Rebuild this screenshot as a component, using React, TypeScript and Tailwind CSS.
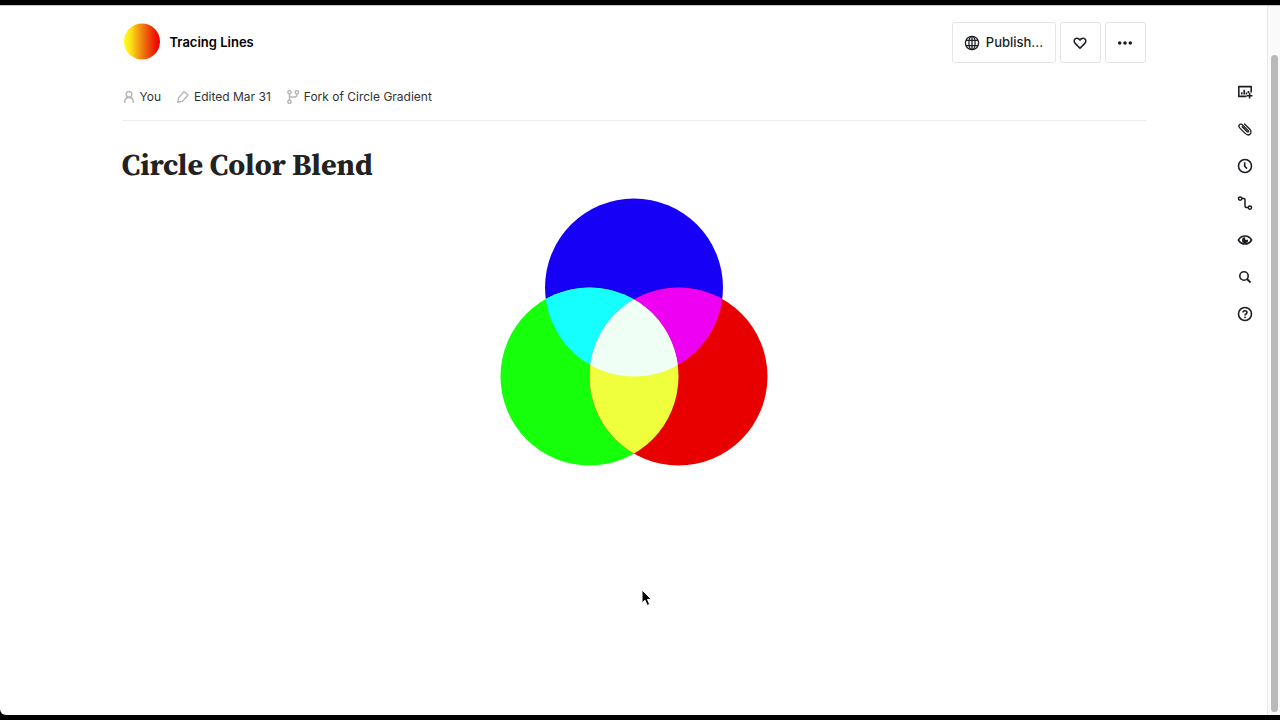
import type { ReactNode } from "react";

function Icon({ children, className = "size-4" }: { children: ReactNode; className?: string }) {
  return (
    <svg
      viewBox="0 0 16 16"
      className={className}
      fill="none"
      stroke="currentColor"
      strokeWidth={1.6}
      strokeLinejoin="round"
      aria-hidden="true"
    >
      {children}
    </svg>
  );
}

const tools: { label: string; icon: ReactNode }[] = [
  {
    label: "Insert cell",
    icon: (
      <>
        <path d="M9.5 12.4H1.800V2.600h12.400v6M4.800 10.400V8.200M7.200 10.400V5.800M9.400 10.400V8.600M11.400 9V7" />
        <path d="M12.600 8.800v5.800M9.700 11.700h5.800" />
      </>
    ),
  },
  {
    label: "File attachments",
    icon: (
      <path
        strokeLinecap="round"
        strokeWidth={1.3}
        d="M5.200 5.800 9.900 10.500c1.200 1.200 2.300.1 1.100-1.100L5.800 4.200C3.300 1.700.4 4.600 2.900 7.100l5.300 5.300c3.700 3.700 8.100-.7 4.400-4.400L7.600 3"
      />
    ),
  },
  {
    label: "History",
    icon: (
      <>
        <circle cx="8" cy="8" r="6.500" />
        <path d="M7.700 4.200V8.200L10 10.600" />
      </>
    ),
  },
  {
    label: "Minimap",
    icon: (
      <g strokeWidth={1.5}>
        <circle cx="3.200" cy="3.600" r="1.700" />
        <circle cx="12.900" cy="12.600" r="1.700" />
        <path d="M4.900 3.600h1.900Q8 3.600 8 4.800v6.500q0 1.300 1.200 1.300h2" />
      </g>
    ),
  },
  {
    label: "Preview",
    icon: (
      <>
        <path d="M1.400 8C3 5.200 5.400 4 8 4s5 1.200 6.600 4c-1.600 2.800-4 4-6.600 4S3 10.800 1.400 8Z" />
        <path d="M8.200 5.200v2.600h2.800A3 3 0 1 1 8.200 5.200Z" fill="currentColor" stroke="none" />
      </>
    ),
  },
  {
    label: "Search",
    icon: (
      <>
        <circle cx="7" cy="7" r="4.200" />
        <path d="m10 10 3.600 3.600" strokeWidth={1.900} />
      </>
    ),
  },
  {
    label: "Help",
    icon: (
      <>
        <circle cx="8" cy="8" r="6.500" />
        <path d="M6 6.600C6 5.300 6.900 4.700 8 4.700s2 .7 2 1.800c0 1.500-2 1.500-2 3" />
        <circle cx="8" cy="11.300" r=".9" fill="currentColor" stroke="none" />
      </>
    ),
  },
];

const actionButton =
  "flex h-[41px] items-center justify-center rounded-[3px] border border-[#e4e4e4] bg-white text-[#1b1e23]";

function ColorBlend() {
  return (
    <svg viewBox="0 0 268 268" className="w-[268px]" role="img" aria-label="Three overlapping circles">
      <defs>
        <clipPath id="blue-area">
          <circle cx="134" cy="89.500" r="89" />
        </clipPath>
        <clipPath id="green-area">
          <circle cx="89.500" cy="178.500" r="89" />
        </clipPath>
      </defs>
      <circle cx="134" cy="89.500" r="89" fill="#1600f5" />
      <circle cx="89.500" cy="178.500" r="89" fill="#16ff0b" />
      <circle cx="178.500" cy="178.500" r="89" fill="#e80000" />
      <g clipPath="url(#blue-area)">
        <circle cx="89.500" cy="178.500" r="89" fill="#16ffff" />
        <circle cx="178.500" cy="178.500" r="89" fill="#ee00f2" />
      </g>
      <g clipPath="url(#green-area)">
        <circle cx="178.500" cy="178.500" r="89" fill="#efff3c" />
        <g clipPath="url(#blue-area)">
          <circle cx="178.500" cy="178.500" r="89" fill="#f0fff6" />
        </g>
      </g>
    </svg>
  );
}

export default function App() {
  return (
    <div className="flex h-screen flex-col bg-black py-[5px] font-['Inter',sans-serif] text-[13px] text-[#1b1e23]">
      <div className="flex min-h-0 flex-1 overflow-hidden rounded-bl-md border-t border-[#c8c8c8] bg-white">
        <div className="w-11 shrink-0" />
        <main className="min-w-0 flex-1">
          <div className="mx-auto max-w-5xl">
            <header className="flex items-center justify-between pt-4">
              <a href="#author" className="flex items-center gap-2 font-semibold text-black">
                <svg viewBox="0 0 40 40" className="size-10" aria-hidden="true">
                  <defs>
                    <linearGradient id="avatar">
                      <stop offset="0" stopColor="#ffff18" />
                      <stop offset=".18" stopColor="#ffe316" />
                      <stop offset=".5" stopColor="#ee8010" />
                      <stop offset=".9" stopColor="#f00c00" />
                      <stop offset="1" stopColor="#ee0000" />
                    </linearGradient>
                  </defs>
                  <circle cx="20" cy="18.500" r="18" fill="url(#avatar)" />
                </svg>
                Tracing Lines
              </a>
              <div className="flex gap-1">
                <button type="button" className={`${actionButton} w-[104px] gap-[6px] font-medium`}>
                  <Icon>
                    <g strokeWidth={1.300}>
                      <circle cx="8" cy="8" r="6.600" />
                      <ellipse cx="8" cy="8" rx="3.100" ry="6.600" />
                      <path d="M8 1.400v13.200M2.200 5.400h11.600M2.200 10.600h11.600" />
                    </g>
                  </Icon>
                  Publish...
                </button>
                <button type="button" aria-label="Like" className={`${actionButton} w-[41px]`}>
                  <Icon>
                    <path d="M8 13.300 3.400 8.600C.9 6 2.600 3.200 5 3.200c1.300 0 2.300.7 3 1.900.7-1.200 1.700-1.900 3-1.900 2.400 0 4.100 2.800 1.600 5.400Z" />
                  </Icon>
                </button>
                <button type="button" aria-label="More" className={`${actionButton} w-[41px]`}>
                  <Icon>
                    <g fill="currentColor" stroke="none">
                      <circle cx="2.700" cy="8" r="1.800" />
                      <circle cx="8" cy="8" r="1.800" />
                      <circle cx="13.300" cy="8" r="1.800" />
                    </g>
                  </Icon>
                </button>
              </div>
            </header>

            <div className="mt-6 flex h-[34px] gap-[15px] border-b border-[#ededed] text-xs leading-5 text-[#333] [&_svg]:text-[#b5b5b5]">
              <span className="flex h-5 items-center gap-1">
                <Icon className="size-[14px]">
                  <circle cx="8" cy="4.900" r="3.200" />
                  <path d="M3.200 14.800v-1.500c0-3 2-4.800 4.800-4.800s4.800 1.800 4.800 4.800v1.500" />
                </Icon>
                You
              </span>
              <span className="flex h-5 items-center gap-1">
                <Icon className="size-[14px]">
                  <path d="m2 14 .9-5L9.300 1.700l4.500 4L7.200 13Z" />
                </Icon>
                Edited Mar 31
              </span>
              <span className="flex h-5 items-center gap-1">
                <Icon className="size-[14px]">
                  <circle cx="4" cy="2.600" r="1.900" />
                  <circle cx="12.400" cy="2.600" r="1.900" />
                  <circle cx="4" cy="13.400" r="1.900" />
                  <path d="M4 4.500v7M12.400 4.500v1.600Q12.400 8 10.400 8H4" />
                </Icon>
                <a href="#fork">Fork of Circle Gradient</a>
              </span>
            </div>

            <h1 className="mt-6 font-['Source_Serif_Pro','Source_Serif_4','Liberation_Serif',serif] text-[30px] leading-10 font-bold text-[#222]">
              Circle Color Blend
            </h1>
            <div className="mt-[13px] flex justify-center">
              <ColorBlend />
            </div>
          </div>
        </main>

        <nav aria-label="Notebook tools" className="flex w-11 shrink-0 flex-col items-center gap-[21px] pt-[78px]">
          {tools.map((tool) => (
            <button key={tool.label} type="button" aria-label={tool.label} title={tool.label}>
              <Icon>{tool.icon}</Icon>
            </button>
          ))}
        </nav>

        <div className="w-[13px] shrink-0 border-l border-[#e8e8e8] bg-[#fafafa] pt-[49px] pr-[2px] pb-[3px] pl-[3px]">
          <div className="h-full rounded-full bg-[#b9b9b9]" />
        </div>
      </div>

      <svg viewBox="0 0 12 18" className="pointer-events-none absolute top-[589px] left-[641px] w-3" aria-hidden="true">
        <path d="M1 1v13l3-2.800 2.200 5.200 2.500-1L6.500 10.400h4Z" fill="#000" stroke="#fff" />
      </svg>
    </div>
  );
}
